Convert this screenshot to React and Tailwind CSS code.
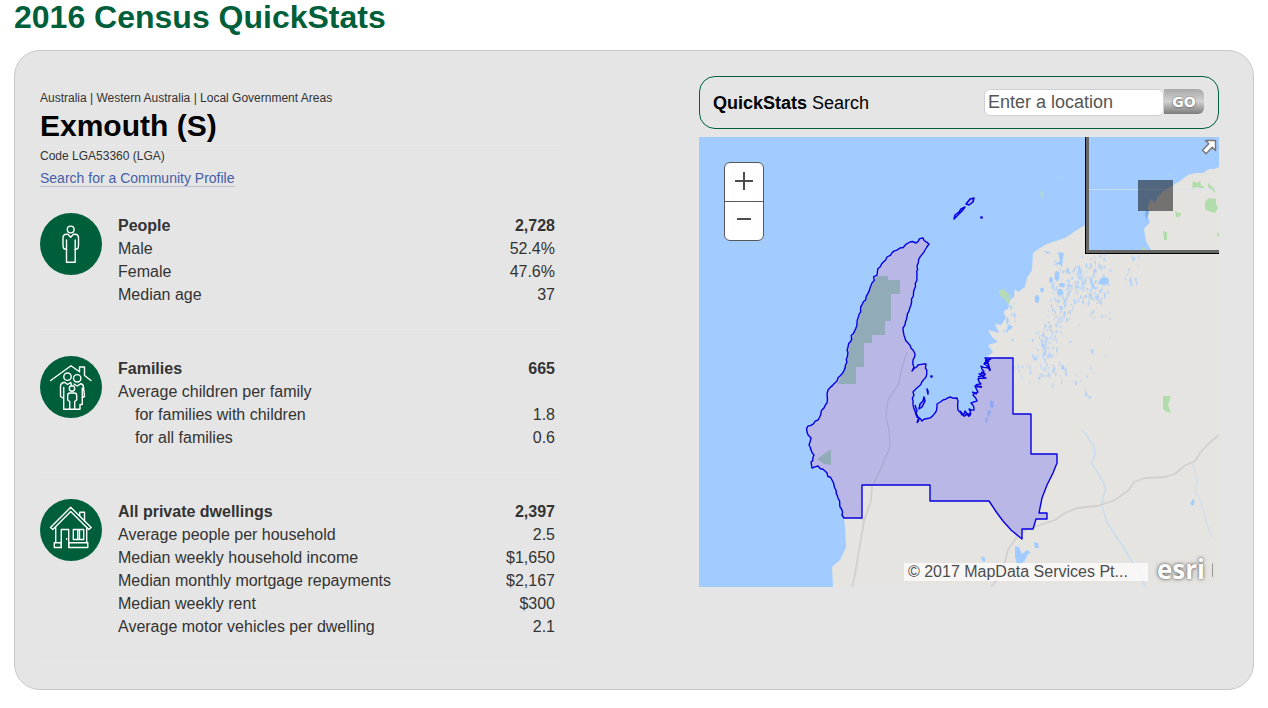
import React from "react";

/* ---------- map geometry ---------- */

const NORTH_COAST = [
  [1219, 200], [1085, 225], [1077, 230], [1065, 238], [1047, 244], [1040, 248], [1033, 253], [1032, 270],
  [1027, 278], [1025, 287], [1018, 292], [1015, 289], [1014, 297], [1010, 300], [1008, 309],
  [1003, 311], [1006, 318], [1001, 325], [995, 324], [999, 333], [988, 330], [992, 337], [998, 342],
  [988, 345], [993, 352], [986, 358],
];

const GULF_COAST = [
  [985, 358], [989, 361], [984, 364], [990, 369], [981, 366], [984, 372], [979, 374], [986, 378],
  [978, 379], [981, 384], [975, 386], [978, 392], [973, 395], [977, 401], [971, 403], [974, 410],
  [969, 409], [970, 415], [965, 411], [962, 415], [958, 410], [957, 398], [950, 397], [943, 400],
  [937, 404], [935, 413], [930, 418], [922, 421], [917, 417], [913, 403], [913, 392], [918, 387],
  [926, 377], [926, 364], [918, 365], [912, 371], [914, 367], [913, 360], [915, 354], [911, 348],
  [905, 338], [903, 328], [907, 317], [911, 305], [914, 290], [917, 280], [917, 266], [920, 257],
  [925, 250], [929, 244], [923, 238],
];

const WEST_COAST = [
  [923, 238], [916, 243], [910, 242], [900, 248], [887, 257], [880, 267], [872, 283], [870, 288],
  [862, 305], [857, 323], [848, 347], [847, 362], [840, 376], [837, 381], [828, 390], [827, 403],
  [821, 412], [818, 420], [808, 426], [807, 432], [811, 438], [809, 445], [814, 455], [811, 462],
  [812, 468], [818, 466], [827, 473], [834, 485], [838, 498], [840, 507], [844, 518],
];

const SOUTH_COAST = [[844, 518], [845, 527], [846, 547], [840, 560], [832, 567], [833, 587], [1219, 587]];

const INLAND_BORDER = [
  [844, 518], [862, 518], [862, 485], [930, 485], [930, 501], [989, 501], [997, 513], [1003, 521],
  [1011, 530], [1022, 539], [1022, 529], [1033, 529], [1036, 519], [1047, 519], [1047, 513],
  [1039, 513], [1042, 498], [1047, 485], [1053, 473], [1057, 463], [1057, 454], [1031, 454],
  [1031, 414], [1013, 414], [1013, 358], [985, 358],
];

function randomSource(seed) {
  let s = seed;
  return () => {
    s = (s * 16807) % 2147483647;
    return s / 2147483647;
  };
}

/* Adds small bends between coast points so the shoreline looks natural. */
function roughen(points, amount, seed) {
  const rnd = randomSource(seed);
  const out = [points[0]];
  for (let i = 1; i < points.length; i++) {
    const [x0, y0] = points[i - 1];
    const [x1, y1] = points[i];
    const steps = Math.max(1, Math.round(Math.hypot(x1 - x0, y1 - y0) / 3));
    for (let k = 1; k < steps; k++) {
      const t = k / steps;
      out.push([
        x0 + (x1 - x0) * t + (rnd() - 0.5) * amount,
        y0 + (y1 - y0) * t + (rnd() - 0.5) * amount,
      ]);
    }
    out.push(points[i]);
  }
  return out;
}

const toPath = (pts) => "M" + pts.map(([x, y]) => x.toFixed(1) + " " + y.toFixed(1)).join("L") + "Z";

const gulf = roughen(GULF_COAST, 1.8, 11);
const west = roughen(WEST_COAST, 2.2, 23);
const LAND = toPath([...NORTH_COAST, ...gulf, ...west, ...SOUTH_COAST]);
const SHIRE = toPath([...gulf, ...west, ...INLAND_BORDER]);

function makePools() {
  const rnd = randomSource(77);
  const clusters = [
    [1078, 280, 24, 30, 95],
    [1060, 308, 14, 26, 75],
    [1045, 345, 14, 22, 65],
    [1098, 290, 18, 42, 60],
    [1132, 270, 12, 30, 20],
    [1008, 320, 9, 26, 30],
    [1045, 372, 42, 18, 40],
    [1080, 350, 50, 60, 26],
  ];
  const pools = [];
  clusters.forEach(([cx, cy, w, h, n]) => {
    for (let i = 0; i < n; i++) {
      pools.push({
        x: cx + (rnd() + rnd() - 1) * w,
        y: cy + (rnd() + rnd() - 1) * h,
        rx: 0.5 + rnd() * 0.8,
        ry: 0.7 + rnd() * 2.2,
        o: 0.3 + rnd() * 0.5,
      });
    }
  });
  return pools;
}
const POOLS = makePools();

function RegionMap() {
  return (
    <svg
      className="block h-full w-full"
      viewBox="699 137 520 450"
      preserveAspectRatio="xMidYMid slice"
      role="img"
      aria-label="Map of Exmouth (S)"
    >
      <rect x="0" y="0" width="2000" height="1000" fill="#a2ccff" />
      <path d={LAND} fill="#e6e4e0" />
      <path d="M999 291l4-2 5 4 3 6-3 6-3-6-5-3z" fill="#b7dcb5" />
      <path d="M1039 190l4 2 0 7-3-3zM1057 177l2 0 0 2-2 0z" fill="#a9d6dc" />

      <g fill="#a2ccff">
        {POOLS.map((p, i) => (
          <ellipse key={i} cx={p.x} cy={p.y} rx={p.rx} ry={p.ry} opacity={p.o} />
        ))}
        <ellipse cx="1104" cy="281" rx="5" ry="4" transform="rotate(-20 1104 281)" />
        <ellipse cx="1060" cy="292" rx="3" ry="3" />
        <ellipse cx="1062" cy="285" rx="3" ry="2" />
        <ellipse cx="1042" cy="290" rx="2" ry="2.5" />
        <ellipse cx="1037" cy="299" rx="2.2" ry="4" />
        <ellipse cx="1057" cy="276" rx="2.4" ry="5" />
        <ellipse cx="1051" cy="280" rx="1.8" ry="3" />
        <path d="M1058 252l6 1-1 5-1 9-3-3-6 1 7-4z" />
        <path d="M1088 276l4 4 4 10-3-3-3-7z" />
        <path d="M1043 251l7 1-2 2z" />
        <path d="M1008 325l5 1-2 3-4 2z" />
        <path d="M1015 546l4 1 3 7 5-4 4 3-3 1-4 8-7 3-2-8z" />
        <path d="M1034 542l4 1 1 5-4 0z" />
        <path d="M981 556l4 2 0 4-3-1z" />
        <path d="M1190 504l3-5 2 2-2 5z" />
      </g>
      <g fill="none" stroke="#cbdcee" strokeWidth="1.6" strokeLinejoin="round">
        <path d="M1081 430L1086 434L1090 441L1094 446L1095 455L1091 463L1096 470L1102 480L1106 488L1103 497L1102 506L1107 522L1115 535L1122 545L1131 560L1142 577L1145 587" />
        <path d="M1193 463L1197 480L1195 492L1200 500L1205 517L1209 530L1212 537" strokeWidth="1" />
      </g>
      <g fill="none" stroke="#d2d0ce" strokeWidth="1.8" strokeLinejoin="round">
        <path d="M1219 435L1208 444L1200 453L1195 461L1184 466L1175 474L1165 477L1145 478L1134 482L1129 490L1115 500L1097 506L1077 508L1065 513L1055 520L1040 525L1026 530L1016 538L1008 550L1004 565L997 580L991 587" />
        <path d="M862 518L864 522L859 550L855 575L852 587" />
        <path d="M872 485L871 500L865 518L864 522" />
      </g>
      <path d="M1163 396l8 0-3 9 3 8-4-1-4-3z" fill="#b1dcac" />

      <path d={SHIRE} fill="#b9b7e6" />
      <path
        d="M877 276H888V280H900V294H891V321H885V335H872V343H864V367H856V384H838L847 362L849 347L858 323L863 305L871 288Z"
        fill="#91abb9"
      />
      <path d="M817 459L831 449V465L824 464Z" fill="#91abb9" />
      <path
        d="M907 352L901 371L899 383L888 400L886 417L889 430L890 447L878 475L873 485"
        fill="none"
        stroke="#a9a7cf"
        strokeWidth="1.2"
      />
      <path
        d="M990 400l4 2-1 6-3-1zM988 410l3 1-2 6-2-2zM986 417l2 1-1 5-2-1z"
        fill="#8ea9f0"
      />

      <path d={SHIRE} fill="none" stroke="#0600e0" strokeWidth="1.4" strokeLinejoin="round" />
      <g fill="#a2a8f4" stroke="#0600e0" strokeWidth="1.5" strokeLinejoin="round">
        <path d="M966 204L970 199L974 198L973 202L969 205Z" />
        <path d="M954 219L955 215L959 212L961 209L965 207L962 211L958 215Z" />
        <path d="M981 217h1v1h-1z" />
        <path d="M931 376h1v1h-1z" />
        <path d="M927 389l1 5 0-3z" />
        <path d="M920 404l3-3 1-4 1 4-3 6-3 2z" />
        <path d="M915 405l2 6-1 2 3 6-1 3M919 417l-2 6" fill="none" />
        <path
          d="M985 361l6-2M984 363l4 0 2 8M981 372l4 2-2 3M978 377l6-2M975 386l7 1M972 392l5 2M960 411l4 5 3-2 2 2 2-3"
          fill="none"
          strokeWidth="1.8"
        />
      </g>
    </svg>
  );
}

function OverviewMap() {
  return (
    <svg className="block h-full w-full" viewBox="1089 137 130 113" preserveAspectRatio="none" aria-hidden="true">
      <rect x="1089" y="137" width="130" height="113" fill="#a2ccff" />
      <path
        d="M1219 167L1214 169L1209 169L1203 173L1195 173L1188 175L1180 181L1172 186L1165 190L1158 196L1155 203L1151 199L1148 206L1146 213L1150 222L1144 229L1146 241L1151 250H1219Z"
        fill="#e6e4e0"
      />
      <path
        d="M1193 181l4 2 3-2 1 4 4 3-5 0-3-1-5 1zM1208 183l3 3 4 3 0 4-4-4-3-2zM1205 202l4-4 7 1 0 5 2 4-3 5-7-2-3-2zM1175 211l4 2 3 0-3 4-3 0zM1163 231l4 1 0 8-3 0zM1142 247l5 3-6 0zM1169 173l2 2-2 2zM1217 233l2 0 0 4-2-1z"
        fill="#b1dcac"
      />
      <path d="M1089 189.500H1219" stroke="#d5e5f5" strokeWidth="1" opacity=".7" />
      <path d="M1145 213l2-4 2 2-1 5-2 4z" fill="#7fb0ee" />
      <rect x="1138" y="180" width="35" height="31" fill="#000" opacity=".5" />
    </svg>
  );
}

/* ---------- round pictograms ---------- */

function Badge({ children }) {
  return (
    <svg className="h-[62px] w-[62px] shrink-0" viewBox="0 0 62 62" aria-hidden="true">
      <circle cx="31" cy="31" r="31" fill="#005f3b" />
      <g fill="none" stroke="#fff" strokeWidth="1.4" strokeLinejoin="round" strokeLinecap="round">
        {children}
      </g>
    </svg>
  );
}

const PersonIcon = () => (
  <Badge>
    <circle cx="30.700" cy="16.500" r="3.400" />
    <path d="M26.500 36.700L23.700 35.500Q23 34 23 32V25Q23 21.200 26.500 21.200H28L30.700 24.200L33.500 21.200H35Q38.500 21.200 38.500 25V32Q38.500 34 37.800 35.500L35.200 36.700" />
    <path d="M26.500 27V49.200H35.200V27" />
  </Badge>
);

const FamilyIcon = () => (
  <Badge>
    <path d="M10.700 24.500L31 9.700L39.500 15.800V11H44.500V19.500L51 24.500" />
    <circle cx="27.500" cy="20.700" r="3.700" />
    <circle cx="37.200" cy="22.300" r="3.700" />
    <path d="M31.500 29.500L30.700 26.500L27.500 28.500L24.500 26.200Q20.500 26.800 20.500 30.500V40.500L23.700 42.300M23.700 31.500V53.300H40V48.500H42.300V32" />
    <path d="M34 28L37.200 30L40.500 27.800Q43.200 28 43.500 31L44.500 40.500L42.300 41.500" />
    <circle cx="32" cy="32.500" r="2.700" />
    <path d="M29.700 53V45.500L27.700 44V39.500Q27.700 37 30 37H34.300Q36.700 37 36.700 39.500V44L34.700 45.500V53" />
  </Badge>
);

const HouseIcon = () => (
  <Badge>
    <path d="M10.500 28.500L30.700 8.300L51.200 28.500L48.800 30.500L30.700 12.500L12.800 30.500Z" />
    <path d="M39.700 16.500V13.300H44.500V21.500" />
    <path d="M15.700 28.500V43.500M46.700 28.500V43.500" />
    <path d="M14.300 43.700H21.300V48.500H14.300ZM28.700 43.700H47.800V48.500H28.700Z" />
    <path d="M21.300 48.500V30.500H28.700V48.500M26.700 39.700V40.300" />
    <path d="M33.300 30.500H43.700V40.500H33.300ZM37.700 30.500V40M39.500 30.500V40" />
  </Badge>
);

/* ---------- data ---------- */

const SECTIONS = [
  {
    Icon: PersonIcon,
    rows: [
      ["People", "2,728"],
      ["Male", "52.4%"],
      ["Female", "47.6%"],
      ["Median age", "37"],
    ],
  },
  {
    Icon: FamilyIcon,
    rows: [
      ["Families", "665"],
      ["Average children per family", ""],
      ["for families with children", "1.8", true],
      ["for all families", "0.6", true],
    ],
  },
  {
    Icon: HouseIcon,
    rows: [
      ["All private dwellings", "2,397"],
      ["Average people per household", "2.5"],
      ["Median weekly household income", "$1,650"],
      ["Median monthly mortgage repayments", "$2,167"],
      ["Median weekly rent", "$300"],
      ["Average motor vehicles per dwelling", "2.1"],
    ],
  },
];

function StatSection({ Icon, rows }) {
  return (
    <section className="flex gap-4 border-b border-[#e8e8e8] pt-[26px] pr-[5px] pb-[23px]">
      <Icon />
      <table className="mt-px grow self-start text-base leading-[23px] text-[#333]">
        <tbody>
          {rows.map(([label, value, indent], i) => (
            <tr key={label} className={i === 0 ? "font-bold" : ""}>
              <th
                scope="row"
                className={(indent ? "pl-[17px] " : "p-0 ") + "text-left " + (i === 0 ? "font-bold" : "font-normal")}
              >
                {label}
              </th>
              <td className="p-0 text-right">{value}</td>
            </tr>
          ))}
        </tbody>
      </table>
    </section>
  );
}

export default function App() {
  return (
    <div className="bg-white px-3.5 pb-4 font-['Liberation_Sans',Arial,sans-serif]">
      <h1 className="pb-4 text-[32px] leading-[34px] font-bold text-[#005f3b]">2016 Census QuickStats</h1>

      <main className="flex items-start justify-between gap-8 rounded-[26px] border border-[#c9c9c9] bg-[#e5e5e5] pt-[25px] pr-[34px] pb-[27px] pl-[25px]">
        <div className="max-w-[520px] grow pt-3.5">
          <header>
            <p className="text-xs leading-4 text-[#333]">Australia | Western Australia | Local Government Areas</p>
            <h2 className="border-b border-[#e8e8e8] pt-px text-[30px] leading-[38px] font-bold text-black">
              Exmouth (S)
            </h2>
            <p className="pt-0.5 text-xs leading-4 text-[#333]">Code LGA53360 (LGA)</p>
            <p className="pt-1.5 text-sm leading-4">
              <a href="#profile" className="inline-block border-b border-[#b9c0d0] text-[#4660a8]">
                Search for a Community Profile
              </a>
            </p>
          </header>
          {SECTIONS.map((s) => (
            <StatSection key={s.rows[0][0]} {...s} />
          ))}
        </div>

        <div className="flex max-w-[520px] grow flex-col gap-2">
          <form
            className="flex items-center justify-between rounded-2xl border border-[#005f3b] py-3 pr-3.5 pl-[13px]"
            onSubmit={(e) => e.preventDefault()}
          >
            <label htmlFor="location" className="text-lg leading-6 text-black">
              <b>QuickStats</b> Search
            </label>
            <span className="flex items-start">
              <input
                id="location"
                type="text"
                placeholder="Enter a location"
                className="h-[27px] w-[180px] rounded-md border border-[#d0d0d0] bg-white px-[3px] text-lg leading-6 text-black placeholder:text-[#555]"
              />
              <button
                type="submit"
                className="h-[25px] w-10 rounded-r-md bg-linear-to-b from-[#a8a8a8] via-[#d2d2d2] to-[#7c7c7c] font-['DejaVu_Sans',sans-serif] text-sm leading-6 font-bold text-white [text-shadow:0_0_2px_#777,0_1px_2px_#777]"
              >
                GO
              </button>
            </span>
          </form>

          <div className="relative h-[450px] overflow-hidden">
            <RegionMap />

            <div className="absolute top-[25px] left-[25px] flex w-10 flex-col overflow-hidden rounded-md border border-[#57585a] bg-white">
              <button
                type="button"
                aria-label="Zoom in"
                className="flex h-[39px] items-center justify-center border-b border-[#57585a]"
              >
                <svg className="h-5 w-5" viewBox="0 0 20 20" aria-hidden="true">
                  <path d="M1 9H19M10 0V18" stroke="#4c4c4c" strokeWidth="2" />
                </svg>
              </button>
              <button type="button" aria-label="Zoom out" className="flex h-[38px] items-center justify-center">
                <svg className="h-5 w-5" viewBox="0 0 20 20" aria-hidden="true">
                  <path d="M3 8H17" stroke="#4c4c4c" strokeWidth="2" />
                </svg>
              </button>
            </div>

            <div className="absolute top-0 right-0 h-[117px] w-[134px] border-b border-l border-black">
              <div className="h-full border-b-[3px] border-l-[3px] border-[#666]">
                <OverviewMap />
              </div>
              <button type="button" aria-label="Enlarge overview map" className="absolute top-0.5 right-0.5 h-4 w-4">
                <svg className="block h-4 w-4" viewBox="0 0 16 16" aria-hidden="true">
                  <path
                    d="M4.500 1.500H14.500V11.500L11.300 8.300L5 14.800L1.500 11.300L7.800 4.800Z"
                    fill="#fff"
                    stroke="#77787c"
                    strokeWidth="1.500"
                    strokeLinejoin="round"
                  />
                </svg>
              </button>
            </div>

            <div className="absolute right-1.5 bottom-0.5 flex items-end gap-[9px]">
              <span className="mb-1 w-[244px] bg-white/70 px-1 text-base leading-[18px] text-[#4c4c4c]">
                © 2017 MapData Services Pt...
              </span>
              <a
                href="#esri"
                className="font-['Open_Sans',sans-serif] text-[26px] leading-8 font-bold text-white [text-shadow:0_0_2px_#666,0_0_4px_#777]"
              >
                esri
              </a>
              <span className="mb-2 -ml-0.5 h-3.5 w-px rounded-sm bg-[#999]" />
            </div>
          </div>
        </div>
      </main>
    </div>
  );
}
